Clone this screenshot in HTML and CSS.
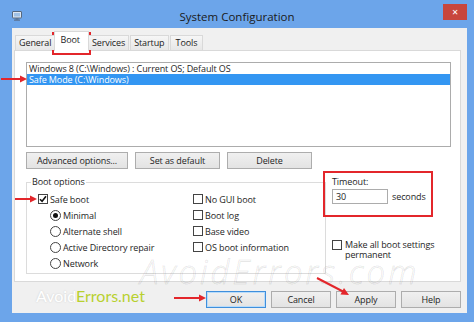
FILE: index.html
```html
<!DOCTYPE html>
<html>
<head>
<meta charset="utf-8">
<link rel="stylesheet" href="styles.css">
</head>
<body>
<div class="window">
  <div class="titlebar">
    <svg class="app-icon" viewBox="0 0 10 10" width="10" height="10">
      <rect x="0.5" y="0.5" width="9" height="6.5" rx="0.5" fill="#dde7f3" stroke="#56687e"/>
      <rect x="2" y="2" width="6" height="3.5" fill="#9fc1e6"/>
      <rect x="3.5" y="7.5" width="3" height="1" fill="#56687e"/>
      <rect x="2" y="8.6" width="6" height="1" fill="#56687e"/>
    </svg>
    <div class="title">System Configuration</div>
    <div class="close">&#x2715;</div>
  </div>
  <div class="client">
    <div class="tabs">
      <div class="tab">General</div>
      <div class="tab active">Boot</div>
      <div class="tab">Services</div>
      <div class="tab">Startup</div>
      <div class="tab">Tools</div>
    </div>
    <div class="panel">
      <div class="listbox">
        <div class="item">Windows 8 (C:\Windows) : Current OS; Default OS</div>
        <div class="item selected">Safe Mode (C:\Windows)</div>
      </div>
      <div class="btn-row">
        <button class="btn wide">Advanced options...</button>
        <button class="btn mid">Set as default</button>
        <button class="btn mid">Delete</button>
      </div>
      <div class="lower">
        <fieldset class="group">
          <legend>Boot options</legend>
          <div class="opts">
            <label class="opt"><span class="check on"><svg viewBox="0 0 8 8" width="8" height="8"><path d="M1 4.2 L3.1 6.3 L7 1.3" fill="none" stroke="#111" stroke-width="1.6"/></svg></span>Safe boot</label>
            <label class="opt"><span class="check"></span>No GUI boot</label>
            <label class="opt sub"><span class="radio on"></span>Minimal</label>
            <label class="opt"><span class="check"></span>Boot log</label>
            <label class="opt sub"><span class="radio"></span>Alternate shell</label>
            <label class="opt"><span class="check"></span>Base video</label>
            <label class="opt sub"><span class="radio"></span>Active Directory repair</label>
            <label class="opt"><span class="check"></span>OS boot information</label>
            <label class="opt sub"><span class="radio"></span>Network</label>
          </div>
        </fieldset>
        <div class="side">
          <div class="timeout-label">Timeout:</div>
          <div class="timeout-row">
            <div class="textbox">30</div>
            <span>seconds</span>
          </div>
          <label class="opt perm"><span class="check"></span><span class="perm-text">Make all boot settings<br>permanent</span></label>
        </div>
      </div>
    </div>
    <div class="footer">
      <button class="btn foot focus">OK</button>
      <button class="btn foot">Cancel</button>
      <button class="btn foot">Apply</button>
      <button class="btn foot">Help</button>
    </div>
  </div>

  <div class="wm-big">AvoidErrors.com</div>
  <div class="wm-small"><span class="wm-a">Avoid</span><span class="wm-b">Errors.net</span></div>

  <svg class="marks" viewBox="0 0 474 322" width="474" height="322">
    <g fill="#e3262b" stroke="#e3262b">
      <rect x="53" y="33" width="37" height="21" fill="none" stroke-width="2"/>
      <rect x="324" y="172" width="108" height="44" fill="none" stroke-width="2"/>
      <line x1="1" y1="79" x2="22" y2="79" stroke-width="2"/>
      <polygon points="27,79 20,75.5 20,82.5" stroke="none"/>
      <line x1="15" y1="199" x2="32" y2="199" stroke-width="2"/>
      <polygon points="37,199 30,195.5 30,202.5" stroke="none"/>
      <line x1="174" y1="298" x2="201" y2="298" stroke-width="2"/>
      <polygon points="206,298 199,294.5 199,301.5" stroke="none"/>
      <line x1="317" y1="278" x2="343" y2="291.5" stroke-width="2"/>
      <polygon points="349,295 340.5,294.5 344,288" stroke="none"/>
    </g>
  </svg>
</div>
</body>
</html>
```
FILE: styles.css
```css
* { box-sizing: border-box; }
html, body { margin: 0; padding: 0; }
body {
  width: 474px;
  height: 322px;
  overflow: hidden;
  background: #6ba4ea;
  font-family: "Open Sans", "Noto Sans", sans-serif;
  font-size: 9px;
  letter-spacing: -0.1px;
  color: #1e1e1e;
}
.window {
  position: relative;
  width: 474px;
  height: 322px;
  display: flex;
  flex-direction: column;
  background: #6ca5ea;
}
.titlebar {
  height: 28px;
  flex: 0 0 28px;
  display: grid;
  grid-template-columns: 1fr auto 1fr;
  align-items: start;
}
.app-icon { margin: 11px 0 0 12px; }
.title {
  margin-top: 9px;
  font-size: 11.5px;
  line-height: 16px;
  letter-spacing: 0;
  color: #1a1a1a;
}
.close {
  justify-self: end;
  margin: 4px 7px 0 0;
  width: 24px;
  height: 16px;
  background: #c8463d;
  color: #fff;
  font-family: "DejaVu Sans", sans-serif;
  font-size: 8px;
  font-weight: bold;
  display: flex;
  align-items: center;
  justify-content: center;
}
.client {
  flex: 1;
  margin: 0 7px 9px 12px;
  background: #f0f0f0;
  padding: 3px 6px 0 2px;
  display: flex;
  flex-direction: column;
}
.tabs {
  display: flex;
  align-items: flex-end;
  height: 19px;
  padding-left: 1px;
  position: relative;
  z-index: 1;
}
.tab {
  height: 15px;
  line-height: 14px;
  padding: 0 3px;
  border: 1px solid #d9d9d9;
  border-bottom: none;
  margin-right: 1px;
  background: linear-gradient(#f6f6f6, #e7e7e7);
  color: #222;
}
.tab.active {
  height: 20px;
  line-height: 15px;
  margin: 0 -1px -1px -2px;
  padding: 0 8px 0 5px;
  background: #fff;
  position: relative;
  z-index: 2;
}
.tab:last-child { padding: 0 5px; }
.panel {
  height: 232px;
  flex: 0 0 232px;
  background: #fff;
  border: 1px solid #d9d9d9;
  padding: 11px 9px 0 11px;
  display: flex;
  flex-direction: column;
}
.listbox {
  height: 85px;
  border: 1px solid #acacac;
  padding: 0;
}
.item {
  height: 11px;
  line-height: 11px;
  padding-left: 2px;
  white-space: nowrap;
}
.item.selected { background: #3396f2; color: #fff; }
.btn-row {
  display: flex;
  gap: 7px;
  margin-top: 5px;
}
.btn {
  height: 17px;
  padding: 0;
  font: inherit;
  letter-spacing: inherit;
  color: #1e1e1e;
  background: linear-gradient(#f0f0f0, #e3e3e3);
  border: 1px solid #adadad;
  line-height: 14px;
}
.btn.wide { width: 102px; }
.btn.mid { width: 85px; }
.lower {
  display: flex;
  margin-top: 7px;
}
.group {
  width: 300px;
  height: 98px;
  margin: 0;
  padding: 0;
  border: 1px solid #dcdcdc;
  min-width: 0;
}
.group legend {
  margin-left: 4px;
  padding: 0 1px;
  line-height: 12px;
}
.opts {
  display: grid;
  grid-template-columns: 155px auto;
  grid-auto-rows: 16px;
  padding: 3px 0 0 11px;
}
.opt {
  display: flex;
  align-items: center;
  white-space: nowrap;
}
.opt.sub { padding-left: 12px; }
.check {
  width: 10px;
  height: 10px;
  border: 1px solid #444;
  background: #fff;
  margin-right: 2px;
  display: flex;
  align-items: center;
  justify-content: center;
  flex: 0 0 auto;
}
.radio {
  width: 11px;
  height: 11px;
  border: 1px solid #444;
  border-radius: 50%;
  background: #fff;
  margin-right: 2px;
  display: flex;
  align-items: center;
  justify-content: center;
  flex: 0 0 auto;
}
.radio.on::after {
  content: "";
  width: 5px;
  height: 5px;
  border-radius: 50%;
  background: #111;
}
.side {
  margin-left: 6px;
  display: flex;
  flex-direction: column;
  width: 119px;
}
.timeout-label { line-height: 12px; }
.timeout-row {
  display: flex;
  align-items: center;
  margin-top: 1px;
}
.textbox {
  width: 56px;
  height: 15px;
  border: 1px solid #acacac;
  background: #fff;
  line-height: 13px;
  padding-left: 3px;
  margin-right: 4px;
}
.perm {
  margin-top: 36px;
  align-items: flex-start;
  white-space: nowrap;
}
.perm-text { line-height: 10px; margin-left: 1px; margin-top: 0; }
.footer {
  display: flex;
  justify-content: flex-end;
  gap: 5px;
  margin-top: 9px;
}
.btn.foot { width: 60px; }
.btn.focus {
  border-color: #3f8fdc;
  box-shadow: inset 0 0 0 1px #b9dcfa;
}
.wm-big {
  position: absolute;
  left: 140px;
  top: 249px;
  font-family: "Open Sans", sans-serif;
  font-size: 33px;
  font-weight: 300;
  font-style: italic;
  letter-spacing: 3px;
  color: rgba(255,255,255,0.12);
  -webkit-text-stroke: 1px rgba(0,0,0,0.09);
  pointer-events: none;
}
.wm-small {
  position: absolute;
  left: 36px;
  top: 286px;
  font-family: "Lato", sans-serif;
  font-size: 16px;
  line-height: 20px;
  letter-spacing: 0;
  pointer-events: none;
}
.wm-a { color: #ffffff; text-shadow: 0 0 2px rgba(0,0,0,0.15); }
.wm-b { color: #b8d02f; }
.marks {
  position: absolute;
  left: 0;
  top: 0;
  pointer-events: none;
}
```
